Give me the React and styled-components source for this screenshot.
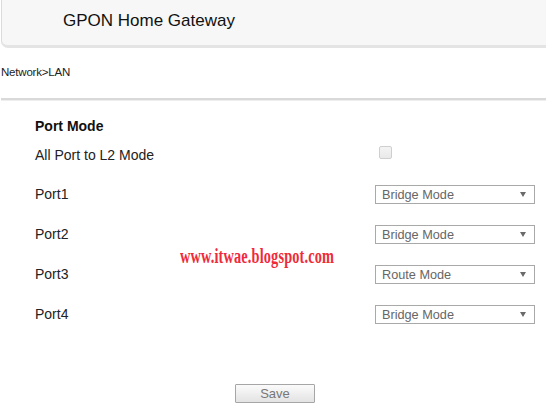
import React from "react";
import styled, { createGlobalStyle } from "styled-components";

const Global = createGlobalStyle`
  html, body { margin: 0; padding: 0; background: #fff; overflow: hidden; }
  body { font-family: "Liberation Sans", Arial, sans-serif; color: #222; }
`;

const Page = styled.div`
  position: relative;
  width: 546px;
  height: 409px;
  overflow: hidden;
`;

const Header = styled.header`
  height: 43px;
  margin-left: 1px;
  margin-right: -12px;
  background: #f7f7f7;
  border-left: 1px solid #dcdcdc;
  border-bottom: 3px solid #e4e4e4;
  border-bottom-left-radius: 7px;
  display: flex;
  align-items: center;
  padding-left: 61px;
  padding-bottom: 2px;
  box-sizing: content-box;
`;

const Title = styled.h1`
  margin: 0;
  font-size: 17px;
  font-weight: normal;
  color: #111;
  line-height: 20px;
  transform: translateY(-1px);
`;

const Breadcrumb = styled.div`
  font-size: 11.5px;
  line-height: 14px;
  color: #222;
  padding: 17px 0 0 1px;
  letter-spacing: -0.2px;
`;

const Divider = styled.div`
  margin: 19px 0 0 1px;
  height: 2px;
  background: #d9d9d9;
  border-bottom: 1px solid #eeeeee;
`;

const Form = styled.section`
  padding: 14px 0 0 35px;
`;

const Row = styled.div`
  display: grid;
  grid-template-columns: 340px 160px;
  align-items: center;
  height: ${(p) => p.$h || 40}px;
`;

const SectionTitle = styled.div`
  font-size: 14px;
  font-weight: bold;
  color: #111;
`;

const Label = styled.div`
  font-size: 14px;
  color: #222;
`;

const Check = styled.span`
  display: block;
  width: 11px;
  height: 11px;
  margin: 0 0 5px 4px;
  border: 1px solid #cfcfcf;
  border-radius: 2px;
  background: linear-gradient(#f4f4f4, #e9e9e9);
`;

const SelectWrap = styled.div`
  position: relative;
  width: 160px;
  height: 19px;
`;

const Select = styled.select`
  appearance: none;
  -webkit-appearance: none;
  width: 160px;
  height: 19px;
  margin: 0;
  padding: 0 0 0 6px;
  border: 1px solid #a9a9a9;
  border-radius: 0;
  background: #fff;
  font-family: "Liberation Sans", Arial, sans-serif;
  font-size: 12.7px;
  color: #666;
  outline: none;
`;

const Arrow = styled.svg`
  position: absolute;
  right: 9px;
  top: 7px;
  pointer-events: none;
`;

const Actions = styled.div`
  display: flex;
  padding: 50px 0 0 235px;
`;

const Button = styled.button`
  width: 80px;
  height: 19px;
  padding: 0;
  border: 1px solid #a6a6a6;
  border-radius: 1px;
  background: linear-gradient(#fbfbfb, #e3e3e3);
  font-family: "Liberation Sans", Arial, sans-serif;
  font-size: 13px;
  color: #777;
  line-height: 17px;
`;

const Watermark = styled.div`
  position: absolute;
  left: 180px;
  top: 244px;
  font-family: "Liberation Serif", "Times New Roman", serif;
  font-weight: bold;
  font-size: 20.5px;
  line-height: 24px;
  color: #ef2b3b;
  white-space: nowrap;
  transform: scaleX(0.7);
  transform-origin: left center;
  letter-spacing: 0.2px;
`;

const ModeSelect = ({ value }) => (
  <SelectWrap>
    <Select defaultValue={value}>
      <option>Bridge Mode</option>
      <option>Route Mode</option>
    </Select>
    <Arrow width="6" height="5" viewBox="0 0 6 5">
      <path d="M0 0H6L3 5Z" fill="#6a6a6a" />
    </Arrow>
  </SelectWrap>
);

const ports = [
  { name: "Port1", mode: "Bridge Mode" },
  { name: "Port2", mode: "Bridge Mode" },
  { name: "Port3", mode: "Route Mode" },
  { name: "Port4", mode: "Bridge Mode" },
];

export default function App() {
  return (
    <Page>
      <Global />
      <Header>
        <Title>GPON Home Gateway</Title>
      </Header>
      <Breadcrumb>Network&gt;LAN</Breadcrumb>
      <Divider />
      <Form>
        <Row $h={21}>
          <SectionTitle>Port Mode</SectionTitle>
        </Row>
        <Row $h={38}>
          <Label>All Port to L2 Mode</Label>
          <Check />
        </Row>
        {ports.map((p) => (
          <Row key={p.name}>
            <Label>{p.name}</Label>
            <ModeSelect value={p.mode} />
          </Row>
        ))}
      </Form>
      <Actions>
        <Button>Save</Button>
      </Actions>
      <Watermark>www.itwae.blogspot.com</Watermark>
    </Page>
  );
}
